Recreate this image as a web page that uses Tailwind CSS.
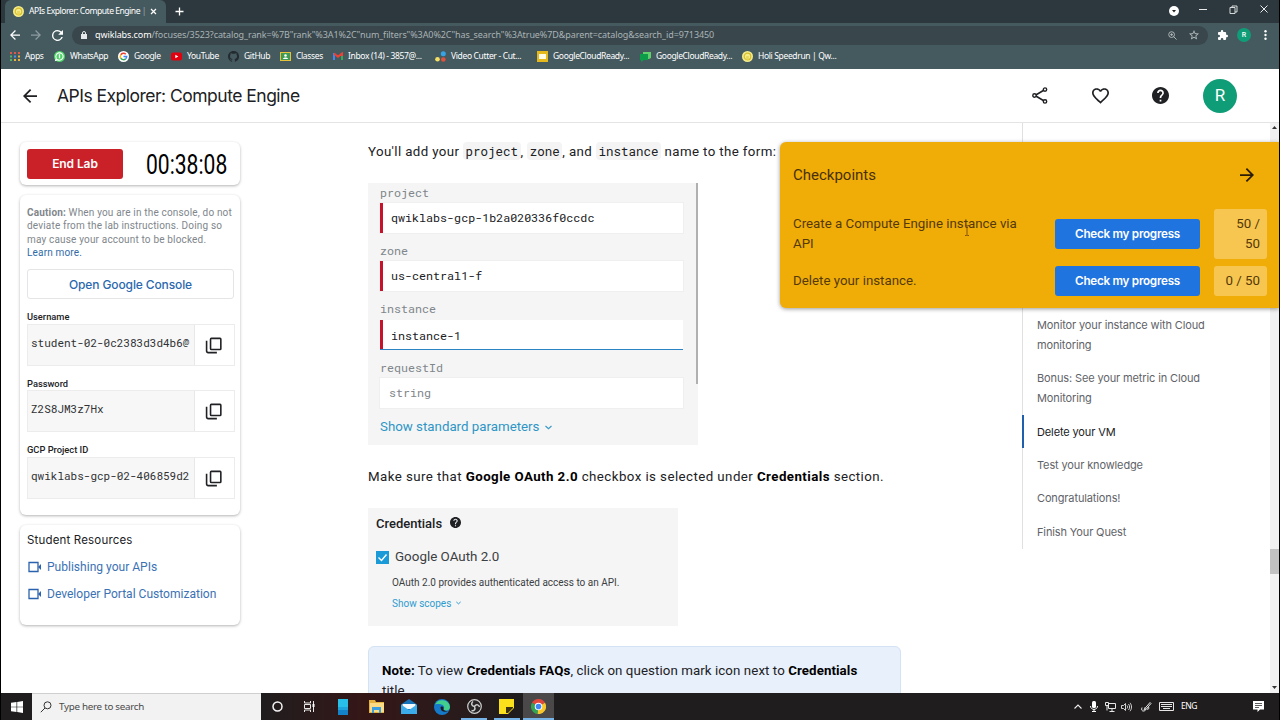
<!DOCTYPE html>
<html lang="en">
<head>
<meta charset="utf-8">
<title>APIs Explorer: Compute Engine</title>
<script src="https://cdn.jsdelivr.net/npm/@tailwindcss/browser@4"></script>
</head>
<body class="w-[1280px] h-[720px] overflow-hidden bg-black">
<svg class="hidden">
  <symbol id="copy" viewBox="0 0 24 24"><path fill="currentColor" d="M3 6H1v13c0 1.660 1.340 3 3 3h11v-2H4c-.55 0-1-.45-1-1V6zM19 2H8a2 2 0 0 0-2 2v12a2 2 0 0 0 2 2h11a2 2 0 0 0 2-2V4a2 2 0 0 0-2-2zm0 14H8V4h11v12z"/></symbol>
  <symbol id="cam" viewBox="0 0 14 12"><path fill="none" stroke="currentColor" stroke-width="1.300" d="M1 1.500h9v9H1z"/><path fill="currentColor" d="M10 6l3-3v6z"/></symbol>
  <symbol id="help" viewBox="2 2 20 20"><path fill="currentColor" d="M12 2C6.480 2 2 6.480 2 12s4.480 10 10 10 10-4.480 10-10S17.520 2 12 2zm1 17h-2v-2h2v2zm2.070-7.750l-.9.920C13.450 12.900 13 13.500 13 15h-2v-.5c0-1.100.45-2.100 1.170-2.830l1.240-1.260c.37-.36.59-.86.59-1.410 0-1.100-.9-2-2-2s-2 .9-2 2H8c0-2.210 1.790-4 4-4s4 1.790 4 4c0 .88-.36 1.680-.93 2.250z"/></symbol>
  <symbol id="back" viewBox="4 4 16 16"><path fill="currentColor" d="M20 11H7.830l5.590-5.590L12 4l-8 8 8 8 1.410-1.410L7.830 13H20v-2z"/></symbol>
  <symbol id="qwik" viewBox="0 0 12 12"><circle cx="6" cy="6" r="6" fill="#f4ec8c"/><circle cx="6" cy="6" r="3.600" fill="none" stroke="#d8bd2c" stroke-width="1.300"/><path d="M4.500 5.500h3v4h-3z" fill="#e9d75a"/></symbol>
</svg>
<div class="flex flex-col w-[1278px] h-[720px] ml-px bg-white">

  <!-- Tab strip -->
  <div class="flex h-[23px] shrink-0 bg-[#2c383d] text-white font-['Noto_Sans','Open_Sans',sans-serif]">
    <div class="flex items-center w-[161px] ml-1 pl-2 rounded-t-md bg-[#455a5f]">
      <svg class="w-[11px] h-[11px] shrink-0"><use href="#qwik"/></svg>
      <span class="ml-[5px] w-[114px] shrink-0 text-[8.600px] tracking-[-0.500px] whitespace-nowrap">APIs Explorer: Compute Engine <span class="text-gray-400">|</span></span>
      <svg class="w-[7px] h-[7px] ml-[7px]" viewBox="0 0 7 7"><path d="M1 1l5 5M6 1l-5 5" stroke="#fff" stroke-width="1.200"/></svg>
    </div>
    <svg class="w-[9px] h-[9px] ml-[9px] mt-[7px]" viewBox="0 0 9 9"><path d="M4.500 .5v8M.5 4.500h8" stroke="#fff" stroke-width="1.300"/></svg>
    <div class="flex-1"></div>
    <svg class="w-[10px] h-[10px] mt-[6px] mr-[20px]" viewBox="0 0 10 10"><circle cx="5" cy="5" r="5" fill="#fff"/><path d="M3 4h4L5 6.500z" fill="#222"/></svg>
    <svg class="w-[8px] h-[8px] mt-[6px] mr-[22px]" viewBox="0 0 8 8"><path d="M0 3.500h8" stroke="#e8eaea"/></svg>
    <svg class="w-[9px] h-[9px] mt-[5px] mr-[22px]" viewBox="0 0 9 9"><path d="M1 2.500h5v6H1zM3 2.500v-1.500h5v6H6" stroke="#e8eaea" fill="none" stroke-width=".9"/></svg>
    <svg class="w-[8px] h-[8px] mt-[5px] mr-[11px]" viewBox="0 0 8 8"><path d="M.5.5l7 7M7.500.5l-7 7" stroke="#fff" stroke-width=".9"/></svg>
  </div>

  <!-- Address bar -->
  <div class="flex items-center h-[22px] pt-[2px] shrink-0 bg-[#455a5f] text-white font-['Noto_Sans','Open_Sans',sans-serif]">
    <svg class="w-[10px] h-[10px] ml-[9px]"><use href="#back"/></svg>
    <svg class="w-[10px] h-[10px] ml-[11px] rotate-180 text-[#8d9b9f]"><use href="#back"/></svg>
    <svg class="w-[11px] h-[11px] ml-[11px]" viewBox="4 4 16 16"><path fill="currentColor" d="M17.650 6.350A7.960 7.960 0 0 0 12 4a8 8 0 1 0 7.730 10h-2.080A6 6 0 1 1 12 6c1.660 0 3.140.69 4.220 1.780L13 11h7V4l-2.350 2.350z"/></svg>
    <div class="flex items-center flex-1 h-[19px] ml-[9px] mr-[10px] pl-[9px] pr-[9px] rounded-full bg-[#39464b]">
      <svg class="w-[6px] h-[8px]" viewBox="0 0 6 8"><path d="M0 3h6v5H0z" fill="#e4e8e8"/><path d="M1.500 3V2a1.500 1.500 0 0 1 3 0v1" fill="none" stroke="#e4e8e8"/></svg>
      <span class="ml-2 text-[9px] tracking-[-0.085px] whitespace-nowrap text-[#a9b4b7]"><span class="text-white">qwiklabs.com</span>/focuses/3523?catalog_rank=%7B"rank"%3A1%2C"num_filters"%3A0%2C"has_search"%3Atrue%7D&amp;parent=catalog&amp;search_id=9713450</span>
      <svg class="w-[9px] h-[9px] ml-auto" viewBox="0 0 10 10"><circle cx="4" cy="4" r="3.200" fill="none" stroke="#b6c0c2"/><path d="M6.300 6.300L9.500 9.500M2.500 4h3M4 2.500v3" stroke="#b6c0c2"/></svg>
      <svg class="w-[10px] h-[10px] ml-[12px]" viewBox="2 2 20 20"><path fill="#b6c0c2" d="M22 9.240l-7.190-.62L12 2 9.190 8.630 2 9.240l5.460 4.730L5.820 21 12 17.270 18.180 21l-1.630-7.030L22 9.240zM12 15.400l-3.760 2.270 1-4.280-3.320-2.880 4.380-.38L12 6.100l1.710 4.040 4.380.38-3.320 2.880 1 4.280L12 15.400z"/></svg>
    </div>
    <svg class="w-[10px] h-[10px]" viewBox="2 1 21 21"><path fill="#fff" d="M20.500 11H19V7a2 2 0 0 0-2-2h-4V3.500a2.500 2.500 0 0 0-5 0V5H4a2 2 0 0 0-2 2v3.800h1.500a2.700 2.700 0 0 1 0 5.400H2V20a2 2 0 0 0 2 2h3.800v-1.500a2.700 2.700 0 0 1 5.400 0V22H17a2 2 0 0 0 2-2v-4h1.500a2.500 2.500 0 0 0 0-5z"/></svg>
    <div class="flex items-center justify-center size-[14px] ml-[9px] rounded-full bg-[#0f9d78] text-[7px] font-medium font-['Roboto',sans-serif]">R</div>
    <svg class="w-[3px] h-[10px] ml-[13px] mr-[12px]" viewBox="0 0 3 10"><g fill="#fff"><circle cx="1.500" cy="1.300" r="1.200"/><circle cx="1.500" cy="5" r="1.200"/><circle cx="1.500" cy="8.700" r="1.200"/></g></svg>
  </div>

  <!-- Bookmarks -->
  <div class="flex items-center h-[24px] pb-[2px] shrink-0 pl-[9px] bg-[#455a5f] text-white text-[8.500px] tracking-[-0.350px] whitespace-nowrap font-['Noto_Sans','Open_Sans',sans-serif]">
    <div class="flex items-center gap-[5px] w-[44px]"><svg class="w-[10px] h-[10px]" viewBox="0 0 10 10"><path fill="#e2574c" d="M0 1h2v2H0zM4 1h2v2H4zM8 1h2v2H8z"/><path fill="#53b66a" d="M0 4.500h2v2H0z"/><path fill="#4e8ff0" d="M4 4.500h2v2H4z"/><path fill="#e9b33c" d="M8 4.500h2v2H8zM4 8h2v2H4zM8 8h2v2H8z"/><path fill="#53b66a" d="M0 8h2v2H0z"/></svg>Apps</div>
    <div class="flex items-center gap-[5px] w-[64px]"><svg class="w-[11px] h-[11px]" viewBox="0 0 12 12"><circle cx="6" cy="6" r="6" fill="#4bd366"/><path fill="none" stroke="#fff" stroke-width="1.200" d="M1.800 10.200l.7-2.200a4 4 0 1 1 1.500 1.500z"/><path fill="#fff" d="M5.300 3.500h1.400v4.500H5.300z"/></svg>WhatsApp</div>
    <div class="flex items-center gap-[5px] w-[53px]"><svg class="w-[11px] h-[11px]" viewBox="0 0 12 12"><circle cx="6" cy="6" r="6" fill="#fff"/><g fill="none" stroke-width="1.600"><path stroke="#ea4335" d="M3 4.200a3.500 3.500 0 0 1 5.500-.7"/><path stroke="#fbbc05" d="M3 4.200a3.500 3.500 0 0 0 0 3.600"/><path stroke="#34a853" d="M3 7.800a3.500 3.500 0 0 0 5.300.8"/><path stroke="#4285f4" d="M8.300 8.600A3.500 3.500 0 0 0 9.500 6H6"/></g></svg>Google</div>
    <div class="flex items-center gap-[5px] w-[57px]"><svg class="w-[11px] h-[9px]" viewBox="0 0 11 9"><rect y=".5" width="11" height="8" rx="2" fill="#e2000f"/><path d="M4.300 2.800v3.400l3-1.700z" fill="#fff"/></svg>YouTube</div>
    <div class="flex items-center gap-[5px] w-[52px]"><svg class="w-[11px] h-[11px]" viewBox="0 0 16 16"><path fill="#232b30" d="M8 0C3.580 0 0 3.580 0 8c0 3.540 2.290 6.530 5.470 7.590.4.070.55-.17.55-.38v-1.490c-2.010.37-2.530-.49-2.690-.94-.09-.23-.48-.94-.82-1.130-.28-.15-.68-.52-.01-.53.63-.01 1.080.58 1.230.82.72 1.210 1.870.87 2.330.66.07-.52.28-.87.51-1.070-1.780-.2-3.640-.89-3.640-3.950 0-.87.31-1.590.82-2.150-.08-.2-.36-1.020.08-2.120 0 0 .67-.21 2.200.82a7.600 7.600 0 0 1 4 0c1.530-1.040 2.200-.82 2.200-.82.44 1.100.16 1.920.08 2.120.51.56.82 1.270.82 2.150 0 3.070-1.870 3.750-3.650 3.950.29.25.54.73.54 1.480v2.200c0 .21.15.46.55.38A8 8 0 0 0 8 0z"/></svg>GitHub</div>
    <div class="flex items-center gap-[5px] w-[53px]"><svg class="w-[11px] h-[9px]" viewBox="0 0 11 9"><path fill="#e6c23c" d="M0 0h11v9H0z"/><path fill="#3f9b54" d="M1 1h9v7H1z"/><circle cx="5.500" cy="3.500" r="1.300" fill="#fff"/><path fill="#fff" d="M3 7c0-2 5-2 5 0z"/></svg>Classes</div>
    <div class="flex items-center gap-[5px] w-[102px]"><svg class="w-[10px] h-[8px]" viewBox="0 0 10 8"><path fill="#4285f4" d="M0 1h2v7H0z"/><path fill="#34a853" d="M8 1h2v7H8z"/><path fill="none" stroke="#ea4335" stroke-width="2" d="M1 1.500L5 4.700 9 1.500V4"/></svg>Inbox (14) - 3857@...</div>
    <div class="flex items-center gap-[5px] w-[102px]"><svg class="w-[11px] h-[11px]" viewBox="0 0 11 11"><circle cx="8.300" cy="2.700" r="2.500" fill="#35a4e6"/><circle cx="2.500" cy="8.300" r="2.300" fill="#f3e064"/><circle cx="8.300" cy="8.500" r="2.300" fill="#e0523e"/></svg>Video Cutter - Cut...</div>
    <div class="flex items-center gap-[5px] w-[103px]"><svg class="w-[11px] h-[11px]" viewBox="0 0 11 11"><path fill="#e5b91c" d="M0 0h11v11H0z"/><path fill="#fffbe6" d="M2 3h7v5H2z"/></svg>GoogleCloudReady...</div>
    <div class="flex items-center gap-[5px] w-[102px]"><svg class="w-[11px] h-[11px]" viewBox="0 0 11 11"><path fill="#5fd06c" d="M3 1h8v6L9 8H3z"/><path fill="#0c9b48" d="M0 3h8v6H4l-3 2V9H0z"/></svg>GoogleCloudReady...</div>
    <div class="flex items-center gap-[5px]"><svg class="w-[11px] h-[11px]"><use href="#qwik"/></svg>Holi Speedrun | Qw...</div>
  </div>

  <!-- Page header -->
  <header class="flex items-center h-[54px] shrink-0 border-b border-[#e4e4e4] pl-[22px] text-[#202124]">
    <svg class="w-[14px] h-[14px]"><use href="#back"/></svg>
    <h1 class="ml-[20px] w-[960px] pt-px text-[17.500px] tracking-[-0.510px] whitespace-nowrap font-['Inter',sans-serif]">APIs Explorer: Compute Engine</h1>
    <div class="flex items-center ml-[15px]">
      <svg class="w-[16px] h-[17px]" viewBox="0 0 16 17"><g fill="none" stroke="#202124" stroke-width="1.500"><path d="M3 8.500l10-6M3 8.500l10 6"/></g><g fill="#fff" stroke="#202124" stroke-width="1.400"><circle cx="2.500" cy="8.500" r="1.700"/><circle cx="13" cy="2.600" r="1.700"/><circle cx="13" cy="14.400" r="1.700"/></g></svg>
      <svg class="w-[17px] h-[16px] ml-[44px]" viewBox="2 3 20 18.500"><path fill="#202124" d="M16.500 3c-1.740 0-3.410.81-4.500 2.090C10.910 3.810 9.240 3 7.500 3 4.420 3 2 5.420 2 8.500c0 3.780 3.400 6.860 8.550 11.540L12 21.350l1.450-1.320C18.600 15.360 22 12.280 22 8.500 22 5.420 19.580 3 16.500 3zm-4.400 15.550l-.1.100-.1-.1C7.140 14.240 4 11.390 4 8.500 4 6.500 5.500 5 7.500 5c1.540 0 3.040.99 3.570 2.360h1.870C13.460 5.990 14.960 5 16.500 5c2 0 3.500 1.500 3.500 3.500 0 2.890-3.140 5.740-7.900 10.050z"/></svg>
      <svg class="w-[17px] h-[17px] ml-[43px]"><use href="#help"/></svg>
      <div class="flex items-center justify-center size-[34px] ml-[34px] rounded-full bg-[#0f9d78] text-white text-[17px] font-['Roboto',sans-serif]">R</div>
    </div>
  </header>

  <!-- Page body -->
  <div class="relative flex h-[570px] shrink-0 overflow-hidden font-['Roboto',sans-serif] text-[#202124]">
    <aside class="flex flex-col gap-[10px] w-[220px] ml-[19px] pt-[19px] shrink-0">
      <div class="flex items-start h-[43px] shrink-0 pl-[7px] pt-[7px] rounded-md shadow-[0_1px_3px_rgba(0,0,0,.3)]">
        <div class="flex items-center justify-center w-[96px] h-[30px] rounded-[3px] bg-[#ca2028] text-white text-[12px] font-semibold tracking-[-0.100px] font-['Inter',sans-serif]">End Lab</div>
        <div class="ml-[23px] w-[81px] pt-px text-[27px] leading-[30px] whitespace-nowrap origin-left scale-x-[0.78] text-black">00:38:08</div>
      </div>

      <div class="h-[320px] shrink-0 pl-[7px] pt-[11px] rounded-md shadow-[0_1px_3px_rgba(0,0,0,.3)]">
        <p class="text-[10px] leading-[13.330px] tracking-[0.170px] whitespace-nowrap text-[#80868b]"><b>Caution:</b> When you are in the console, do not<br>deviate from the lab instructions. Doing so<br>may cause your account to be blocked.<br><span class="text-[#2f6ba8]">Learn more.</span></p>
        <div class="flex items-center justify-center w-[207px] h-[30px] pt-px mt-[10px] rounded-[3px] border border-[#e4e5e6] text-[#2a68ae] text-[12px] tracking-[-0.120px] font-medium font-['Inter',sans-serif]">Open Google Console</div>
        <div class="mt-[11px] h-[14px] leading-[14px] text-[9.300px] font-medium">Username</div>
        <div class="flex w-[208px] h-[42px] border border-[#ececec] text-[11px] font-['Roboto_Mono','Liberation_Mono',monospace]"><div class="w-[167px] pl-[3px] leading-[35px] overflow-hidden whitespace-nowrap text-[#303134] bg-[#f7f7f7] border-r border-[#e8e8e8]">student-02-0c2383d3d4b6@</div><svg class="w-[19px] h-[19px] m-auto"><use href="#copy"/></svg></div>
        <div class="mt-[11px] h-[13px] leading-[13px] text-[9.300px] font-medium">Password</div>
        <div class="flex w-[208px] h-[42px] border border-[#ececec] text-[11px] font-['Roboto_Mono','Liberation_Mono',monospace]"><div class="w-[167px] pl-[3px] leading-[35px] overflow-hidden whitespace-nowrap text-[#303134] bg-[#f7f7f7] border-r border-[#e8e8e8]">Z2S8JM3z7Hx</div><svg class="w-[19px] h-[19px] m-auto"><use href="#copy"/></svg></div>
        <div class="mt-[10px] h-[15px] leading-[15px] text-[9.300px] font-medium">GCP Project ID</div>
        <div class="flex w-[208px] h-[42px] border border-[#ececec] text-[11px] font-['Roboto_Mono','Liberation_Mono',monospace]"><div class="w-[167px] pl-[3px] leading-[35px] overflow-hidden whitespace-nowrap text-[#303134] bg-[#f7f7f7] border-r border-[#e8e8e8]">qwiklabs-gcp-02-406859d2</div><svg class="w-[19px] h-[19px] m-auto"><use href="#copy"/></svg></div>
      </div>

      <div class="h-[100px] shrink-0 pl-[7px] pt-[5px] rounded-md shadow-[0_1px_3px_rgba(0,0,0,.3)]">
        <div class="h-[20px] leading-[20px] text-[11.500px] tracking-[0.170px] font-['Inter',sans-serif]">Student Resources</div>
        <div class="flex items-center h-[20px] mt-[7px] text-[12.050px] text-[#3b72b4]"><svg class="w-[14px] h-[12px] ml-px mr-[5px] text-[#2b62ad]"><use href="#cam"/></svg>Publishing your APIs</div>
        <div class="flex items-center h-[20px] mt-[7px] text-[12.050px] text-[#3b72b4]"><svg class="w-[14px] h-[12px] ml-px mr-[5px] text-[#2b62ad]"><use href="#cam"/></svg>Developer Portal Customization</div>
      </div>
    </aside>

    <main class="w-[654px] ml-[128px] pt-[18px] shrink-0 text-[13.300px]">
      <p class="h-[20px] leading-[20px] tracking-[0.380px] whitespace-nowrap">You'll add your <code class="rounded-sm bg-[#f4f4f4] px-[2.500px] py-px text-[12.500px] tracking-normal font-['Roboto_Mono','Liberation_Mono',monospace]">project</code>, <code class="rounded-sm bg-[#f4f4f4] px-[2.500px] py-px text-[12.500px] tracking-normal font-['Roboto_Mono','Liberation_Mono',monospace]">zone</code>, and <code class="rounded-sm bg-[#f4f4f4] px-[2.500px] py-px text-[12.500px] tracking-normal font-['Roboto_Mono','Liberation_Mono',monospace]">instance</code> name to the form:</p>
      <div class="flex w-[330px] h-[262px] mt-[22px] bg-[#f5f5f5]">
        <div class="w-[303px] ml-[12px] text-[11.700px] font-['Roboto_Mono','Liberation_Mono',monospace]">
          <div class="h-[20px] leading-[20px] text-[#80868b]">project</div>
          <div class="h-[30px] leading-[30px] pl-[8px] border-l-[3px] border-l-[#c5132b] bg-white shadow-[0_0_0_1px_#efefef]">qwiklabs-gcp-1b2a020336f0ccdc</div>
          <div class="h-[20px] leading-[20px] mt-[8px] text-[#80868b]">zone</div>
          <div class="h-[30px] leading-[30px] pl-[8px] border-l-[3px] border-l-[#c5132b] bg-white shadow-[0_0_0_1px_#efefef]">us-central1-f</div>
          <div class="h-[20px] leading-[20px] mt-[8px] text-[#80868b]">instance</div>
          <div class="h-[29px] leading-[31px] mt-px pl-[8px] border-l-[3px] border-l-[#c5132b] bg-white shadow-[0_1px_0_0_#2b83c6]">instance-1</div>
          <div class="h-[20px] leading-[20px] mt-[9px] text-[#80868b]">requestId</div>
          <div class="h-[30px] leading-[30px] pl-[9px] bg-white shadow-[0_0_0_1px_#efefef] text-[#80868b]">string</div>
          <div class="flex items-center h-[20px] mt-[9px] text-[13.300px] text-[#2e95c6] font-['Roboto',sans-serif]">Show standard parameters<svg class="w-[7px] h-[5px] ml-[6px]" viewBox="0 0 7 5"><path d="M.5 1l3 2.700 3-2.700" fill="none" stroke="#3a9ac6" stroke-width="1.200"/></svg></div>
        </div>
        <div class="w-[2px] h-[201px] ml-auto bg-[#b0b0b0]"></div>
      </div>
      <p class="h-[20px] leading-[20px] mt-[22px] tracking-[0.430px] whitespace-nowrap">Make sure that <b class="font-bold text-black">Google OAuth 2.0</b> checkbox is selected under <b class="font-bold text-black">Credentials</b> section.</p>
      <div class="w-[310px] h-[118px] mt-[21px] pl-[8px] pt-[6px] bg-[#f5f5f5]">
        <div class="flex items-center h-[20px] text-[13px] font-medium">Credentials<svg class="w-[11px] h-[11px] ml-[8px] -mt-[3px]"><use href="#help"/></svg></div>
        <div class="flex items-center h-[20px] mt-[13px] text-[13.400px] text-[#3c4043]"><svg class="w-[13px] h-[13px] mr-[6px]" viewBox="0 0 13 13"><path fill="#1b9ad8" d="M0 0h13v13H0z"/><path d="M2.500 6.500l3 3 5-6" fill="none" stroke="#fff" stroke-width="1.400"/></svg>Google OAuth 2.0</div>
        <div class="h-[20px] leading-[20px] mt-[6px] ml-[16px] text-[10px] text-[#3c4043]">OAuth 2.0 provides authenticated access to an API.</div>
        <div class="flex items-center h-[20px] ml-[16px] text-[10px] text-[#2e9bd0]">Show scopes<svg class="w-[5px] h-[4px] ml-[5px]" viewBox="0 0 7 5"><path d="M.5 1l3 2.700 3-2.700" fill="none" stroke="#2e9bd0" stroke-width="1.400"/></svg></div>
      </div>
      <div class="w-[533px] h-[80px] mt-[20px] pl-[13px] pt-[14px] rounded-md border border-[#d3e2f5] bg-[#e8f0fb] leading-[20px] tracking-[0.080px] whitespace-nowrap"><b class="text-black">Note:</b> To view <b class="text-black">Credentials FAQs</b>, click on question mark icon next to <b class="text-black">Credentials</b><br>title.</div>
    </main>

    <nav class="w-[246px] h-[426px] pt-[185px] border-l border-[#e0e0e0] shrink-0 text-[11px] leading-[20px] tracking-[-0.130px] text-[#5f6368] font-['Inter',sans-serif]">
      <div class="pl-[14px] pt-[7px] pb-[6.340px]">Monitor your instance with Cloud<br>monitoring</div>
      <div class="pl-[14px] pt-[7px] pb-[6.340px]">Bonus: See your metric in Cloud<br>Monitoring</div>
      <div class="-ml-px pl-[13px] pt-[7px] pb-[6.340px] border-l-2 border-[#1f5fae] text-[#202124]">Delete your VM</div>
      <div class="pl-[14px] pt-[7px] pb-[6.340px]">Test your knowledge</div>
      <div class="pl-[14px] pt-[7px] pb-[6.340px]">Congratulations!</div>
      <div class="pl-[14px] pt-[7px] pb-[6.340px]">Finish Your Quest</div>
    </nav>

    <div class="flex flex-col items-center w-[9px] ml-auto h-full bg-[#f1f1f1]">
      <svg class="w-[5px] h-[3px] mt-[3px]" viewBox="0 0 5 3"><path d="M0 3l2.500-3L5 3z" fill="#333"/></svg>
      <div class="w-full h-[25px] mt-[420px] bg-[#c1c1c1]"></div>
      <svg class="w-[5px] h-[3px] mt-auto mb-[4px]" viewBox="0 0 5 3"><path d="M0 0l2.500 3L5 0z" fill="#333"/></svg>
    </div>

    <!-- Checkpoints panel -->
    <section class="absolute left-[779px] top-[19px] w-[499px] h-[166px] pl-[13px] pt-[21px] rounded-l-md bg-[#f0ad08] shadow-[0_1px_4px_rgba(0,0,0,.4)] text-[#54390a] text-[13.300px]">
      <div class="flex items-center h-[24px] text-[15px] text-[#47300a]">Checkpoints<svg class="w-[14px] h-[14px] ml-auto mr-[25px] rotate-180 text-[#2b1c04]"><use href="#back"/></svg></div>
      <div class="flex items-center h-[50px] mt-[22px]">
        <div class="w-[262px] leading-[20px] whitespace-nowrap">Create a Compute Engine instance via<br>API</div>
        <div class="flex items-center justify-center w-[145px] h-[30px] pt-px rounded-[3px] bg-[#1f74e0] text-white text-[11.700px] font-semibold tracking-[-0.270px] font-['Inter',sans-serif]">Check my progress</div>
        <div class="w-[53px] h-[50px] ml-[14px] pr-[7px] pt-[5px] rounded-[3px] bg-[#f7c650] text-right leading-[20px]">50 /<br>50</div>
      </div>
      <div class="flex items-center h-[30px] mt-[7px]">
        <div class="w-[262px] leading-[20px]">Delete your instance.</div>
        <div class="flex items-center justify-center w-[145px] h-[30px] pt-px rounded-[3px] bg-[#1f74e0] text-white text-[11.700px] font-semibold tracking-[-0.270px] font-['Inter',sans-serif]">Check my progress</div>
        <div class="w-[53px] h-[30px] ml-[14px] pr-[7px] rounded-[3px] bg-[#f7c650] text-right leading-[30px]">0 / 50</div>
      </div>
    </section>
    <svg class="absolute left-[963px] top-[102px] w-[6px] h-[11px]" viewBox="0 0 6 11"><path d="M1 .5h1.500L3 1l.5-.5H5M3 1v9M1 10.500h1.500L3 10l.5.5H5" fill="none" stroke="#7a4510" stroke-width=".9"/></svg>
  </div>

  <!-- Taskbar -->
  <div class="flex items-center h-[27px] shrink-0 bg-[#1f1d1e] text-white font-['Noto_Sans','Open_Sans',sans-serif]">
    <div class="flex items-center justify-center w-[31px]"><svg class="w-[12px] h-[12px]" viewBox="0 0 12 12"><path fill="#fff" d="M0 1.700L5.500 1v4.700H0zM6.200.9L12 0v5.700H6.200zM0 6.300h5.500V11L0 10.300zM6.200 6.300H12V12l-5.800-.9z"/></svg></div>
    <div class="flex items-center w-[229px] h-[27px] pl-[8px] bg-[#f2f2f2] border-t border-[#cfcfcf] text-[#4a4a4a] text-[9.800px] tracking-[-0.270px]"><svg class="w-[12px] h-[12px] mr-[7px]" viewBox="0 0 12 12"><circle cx="7.500" cy="4.300" r="3.500" fill="none" stroke="#333"/><path d="M5 7L.8 11.200" stroke="#333"/></svg>Type here to search</div>
    <div class="flex items-center h-full bg-linear-to-r from-[#1f1d1e] via-[#351617] via-40% to-[#1f1d1e]">
      <div class="flex items-center justify-center w-[32px]"><svg class="w-[11px] h-[11px]" viewBox="0 0 11 11"><circle cx="5.500" cy="5.500" r="4.500" fill="none" stroke="#f5f5f5" stroke-width="1.500"/></svg></div>
      <div class="flex items-center justify-center w-[33px]"><svg class="w-[11px] h-[11px]" viewBox="0 0 11 11"><path d="M.5 0v2h6V0M.5 3.500h6v4h-6zM.5 11V9h6v2M9.500 0v11" fill="none" stroke="#e8e8e8"/><path d="M8.500 3h2v3h-2z" fill="#fff"/></svg></div>
      <div class="flex items-center justify-center w-[34px]"><svg class="w-[10px] h-[16px]" viewBox="0 0 10 16"><path fill="#1482c8" d="M0 0h10v16H0z"/><path fill="#28bfe8" d="M0 0h10v8H0z"/><path fill="#1ea3da" d="M0 8h10v3H0z"/></svg></div>
      <div class="flex items-center justify-center w-[32px]"><svg class="w-[15px] h-[13px]" viewBox="0 0 15 13"><path fill="#e6b23e" d="M0 0h6l1 2h8v11H0z"/><path fill="#fbdc84" d="M1 3h14v9H1z"/><path fill="#3b9ee0" d="M3 7h9v6h-2v-3H5v3H3z"/></svg></div>
      <div class="flex items-center justify-center w-[33px]"><svg class="w-[16px] h-[15px]" viewBox="0 0 16 15"><path fill="#1571b8" d="M0 5.500L8 0l8 5.500V15H0z"/><path fill="#f3f9fd" d="M1.500 5h13v5h-13z"/><path fill="#3cabea" d="M0 5.500l8 5.500 8-5.500V15H0z"/></svg></div>
      <div class="flex items-center justify-center w-[33px]"><svg class="w-[16px] h-[16px]" viewBox="0 0 16 16"><circle cx="8" cy="8" r="8" fill="#1579c9"/><path fill="#42cf8d" d="M1 5.500A8 8 0 0 1 16 8c0 2.500-2 3.500-4 3.500-1.500 0-3-.6-2-2C11 7 8 4 1 5.500z"/><path fill="#211a1c" d="M6.500 8.500c0 4 4 5.500 8 3.300-2 .6-6 0-5-2.500.5-2-3-2.500-3-.8z"/></svg></div>
      <div class="flex flex-col items-center justify-end w-[32px] h-full"><svg class="w-[15px] h-[15px] mb-[4px]" viewBox="0 0 15 15"><circle cx="7.500" cy="7.500" r="6.800" fill="#262425" stroke="#cfcfcf" stroke-width="1.200"/><path d="M7.500 7.500C4 7 4 4 6 2.500M7.500 7.500c2-3 4.500-1.500 5 .5M7.500 7.500c1.500 3-1 5-3 4" fill="none" stroke="#cfcfcf" stroke-width="1.500"/></svg><div class="w-[26px] h-[2px] bg-[#76b4e8]"></div></div>
      <div class="flex flex-col items-center justify-end w-[33px] h-full"><svg class="w-[15px] h-[15px] mb-[4px]" viewBox="0 0 15 15"><path fill="#fbe01c" d="M0 0h15v9l-6 6H0z"/><path fill="#3b3310" d="M7 8h7v1l-5 5H7z"/></svg><div class="w-[26px] h-[2px] bg-[#76b4e8]"></div></div>
    </div>
    <div class="flex flex-col items-center justify-end w-[31px] h-full bg-[#4a4849]"><svg class="w-[15px] h-[15px] mb-[4px]" viewBox="0 0 16 16"><path fill="#e1473a" d="M8 8L1.070 4A8 8 0 0 1 14.930 4z"/><path fill="#34a353" d="M8 8l-1 8A8 8 0 0 1 1.070 4z"/><path fill="#f8c72b" d="M8 8l6.930-4A8 8 0 0 1 7 16z"/><circle cx="8" cy="8" r="4" fill="#fff"/><circle cx="8" cy="8" r="3" fill="#4285f4"/></svg><div class="w-full h-[2px] bg-[#76b4e8]"></div></div>
    <div class="flex-1"></div>
    <svg class="w-[8px] h-[5px]" viewBox="0 0 8 5"><path d="M.5 4.500L4 1l3.500 3.500" fill="none" stroke="#eee" stroke-width="1.100"/></svg>
    <svg class="w-[8px] h-[11px] ml-[8px]" viewBox="0 0 8 11"><rect x="2" width="4" height="7" rx="1.500" fill="#fff"/><path d="M.5 5c0 4.500 7 4.500 7 0M4 8v2.500M2 10.500h4" fill="none" stroke="#fff"/></svg>
    <svg class="w-[11px] h-[10px] ml-[7px]" viewBox="0 0 11 10"><path d="M3.500 1.500h7v5h-7zM7 7v2M4.500 9.500h5M.5.500h3v3h-3zM2 3.500v5" fill="none" stroke="#e6e6e6"/></svg>
    <svg class="w-[11px] h-[10px] ml-[5px]" viewBox="0 0 11 10"><path d="M.5 3.500h2l2-2v7l-2-2h-2zM6 3.500c.8 1 .8 2 0 3M7.500 2c1.500 2 1.500 4 0 6M9 .8c2 2.500 2 6 0 8.400" fill="none" stroke="#e6e6e6" stroke-width=".9"/></svg>
    <svg class="w-[11px] h-[11px] ml-[9px]" viewBox="0 0 11 11"><path d="M3 8.500L9 1.500l1 1L4.500 9zM1 6.500c-1 2 0 4 2 3.500s2-3 0-3M6 8c1.500 1 2.500-1 1.500-2" fill="none" stroke="#e6e6e6"/></svg>
    <svg class="w-[15px] h-[9px] ml-[7px]" viewBox="0 0 15 9"><path d="M.5.5h14v8H.5zM2 2.500h11M2 4.500h11M4 6.500h7" fill="none" stroke="#e6e6e6"/></svg>
    <span class="w-[17px] ml-[7px] text-[8.500px] tracking-[-0.500px]">ENG</span>
    <svg class="w-[11px] h-[11px] ml-[55px] mr-[15px]" viewBox="0 0 11 11"><path fill="#fff" d="M0 0h11v8.500H7L4.500 11V8.500H0z"/><path d="M2 2.500h7M2 4.500h7M2 6.500h4" stroke="#333" stroke-width=".8"/></svg>
  </div>
</div>
</body>
</html>
